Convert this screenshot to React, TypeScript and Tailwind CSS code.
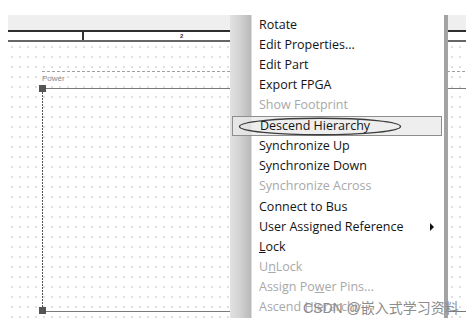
type Item = { label: React.ReactNode; disabled?: boolean; active?: boolean; submenu?: boolean };

const items: Item[] = [
  { label: "Rotate" },
  { label: "Edit Properties..." },
  { label: "Edit Part" },
  { label: "Export FPGA" },
  { label: "Show Footprint", disabled: true },
  { label: "Descend Hierarchy", active: true },
  { label: "Synchronize Up" },
  { label: "Synchronize Down" },
  { label: "Synchronize Across", disabled: true },
  { label: "Connect to Bus" },
  { label: "User Assigned Reference", submenu: true },
  { label: <><span className="underline">L</span>ock</> },
  { label: <>U<span className="underline">n</span>Lock</>, disabled: true },
  { label: <>Assign Po<span className="underline">w</span>er Pins...</>, disabled: true },
  { label: "Ascend Hierarchy", disabled: true },
];

function PowerPart() {
  return (
    <svg width="458" height="276" className="block">
      <line x1="34" y1="29.5" x2="458" y2="29.5" stroke="#a0a0a0" strokeDasharray="3 2" />
      <text x="34" y="38.5" fontSize="8" fill="#8a8a8a" fontFamily="Liberation Sans, sans-serif">Power</text>
      <rect x="31" y="43" width="7" height="7" fill="#555" />
      <line x1="38" y1="46.5" x2="458" y2="46.5" stroke="#7a7a7a" />
      <line x1="34.5" y1="50" x2="34.5" y2="265" stroke="#555" strokeDasharray="2 1" />
      <rect x="31" y="265" width="7" height="7" fill="#555" />
      <line x1="38" y1="269.5" x2="458" y2="269.5" stroke="#7a7a7a" />
    </svg>
  );
}

function ContextMenu() {
  return (
    <div className="absolute left-[222px] top-0 w-[218px] h-[303px] border-r-4 border-[#a3a3a3] bg-[linear-gradient(90deg,#e2e2e2_0px,#d2d2d2_10px,#b9b9b9_21px,#ffffff_22px)] flex flex-col" style={{ fontFamily: '"Open Sans", sans-serif' }}>
      {items.map((it, i) => (
        <div
          key={i}
          className={
            "relative h-[20.3px] flex items-center text-[12.5px] " +
            (it.active ? "mx-[2px] pl-[27px] border border-[#8e8e8e] bg-[#eaeaea]/80 " : "pl-[29px] ") +
            (it.disabled ? "text-[#a8a8a8]" : "text-[#141414]")
          }
        >
          {it.label}
          {it.submenu && <span className="absolute right-[10px] top-[6px] w-0 h-0 border-y-[4px] border-y-transparent border-l-[4px] border-l-[#111]" />}
          {it.active && (
            <svg className="absolute left-[5px] top-[0px]" width="164" height="19">
              <ellipse cx="82" cy="9.5" rx="80.5" ry="8.3" fill="none" stroke="#3c3c3c" strokeWidth="1.4" />
            </svg>
          )}
        </div>
      ))}
    </div>
  );
}

export default function App() {
  return (
    <div className="w-[474px] h-[326px] bg-white pt-[15px] pl-[8px] relative overflow-hidden">
      <div className="relative w-[458px] h-[303px] flex flex-col">
        <div className="h-[15px] bg-[#efefef]" />
        <div className="h-[12px] border-t-2 border-t-[#2e2e2e] border-b-2 border-b-[#666] flex">
          <div className="w-[76px] border-r-2 border-[#333]" />
          <div className="relative flex-1">
            <span className="absolute left-[96px] top-[0px] text-[6px] leading-[8px] text-[#333] font-bold" style={{ fontFamily: '"Liberation Sans", sans-serif' }}>2</span>
          </div>
        </div>
        <div className="flex-1 bg-[radial-gradient(circle,#dedede_0.7px,transparent_1.1px)] bg-[length:8px_10px]">
          <PowerPart />
        </div>
        <ContextMenu />
      </div>
      <span className="absolute left-[303px] top-[298px] text-[14px] text-[#8c8c8c] z-10" style={{ fontFamily: '"Liberation Sans", "Noto Sans CJK SC", sans-serif' }}>
        CSDN @嵌入式学习资料
      </span>
    </div>
  );
}
